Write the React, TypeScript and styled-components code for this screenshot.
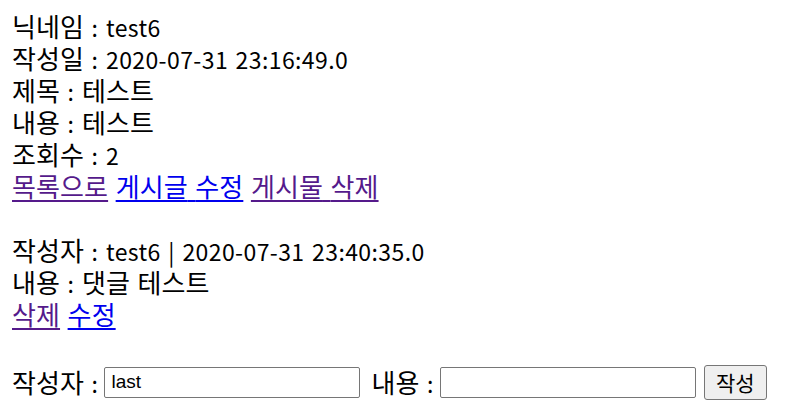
import React from 'react';
import styled, { createGlobalStyle } from 'styled-components';

const GlobalStyle = createGlobalStyle`
    body {
        margin: 10px 12px;
        background: #ffffff;
        color: #000000;
        font-family: 'Noto Sans CJK KR', 'Noto Sans', sans-serif;
        font-size: 23px;
        line-height: 32px;
        letter-spacing: 0.4px;
        word-spacing: 2px;
    }
`;

interface Link {
    label: string;
    visited: boolean;
}

const postLinks: Link[] = [
    { label: '목록으로', visited: true },
    { label: '게시글 수정', visited: false },
    { label: '게시물 삭제', visited: true },
];

const replyLinks: Link[] = [
    { label: '삭제', visited: true },
    { label: '수정', visited: false },
];

// hangul in the original font runs wider than latin, so give it its own size
const Ko = ({ text }: { text: string }) => (
    <>
        {text.split(/([\uAC00-\uD7A3]+)/).map((part, i) =>
            /[\uAC00-\uD7A3]/.test(part) ? <Hangul key={i}>{part}</Hangul> : part
        )}
    </>
);

export default function App() {
    return (
        <>
            <GlobalStyle />
            <Page>
                <Line><Ko text="닉네임 : test6" /></Line>
                <Line><Ko text="작성일 : 2020-07-31 23:16:49.0" /></Line>
                <Line><Ko text="제목 : 테스트" /></Line>
                <Line><Ko text="내용 : 테스트" /></Line>
                <Line><Ko text="조회수 : 2" /></Line>
                <LinkRow links={postLinks} />
                <Blank />
                <Line><Ko text="작성자 : test6 | 2020-07-31 23:40:35.0" /></Line>
                <Line><Ko text="내용 : 댓글 테스트" /></Line>
                <LinkRow links={replyLinks} />
                <Blank />
                <CommentForm onSubmit={(e) => e.preventDefault()}>
                    <Label><Ko text="작성자 :" /></Label>
                    <Field type="text" defaultValue="last" />
                    <Label><Ko text="내용 :" /></Label>
                    <Field type="text" />
                    <SubmitButton type="submit">작성</SubmitButton>
                </CommentForm>
            </Page>
        </>
    );
}

const LinkRow = ({ links }: { links: Link[] }) => (
    <Line>
        {links.map((l, i) => (
            <React.Fragment key={l.label}>
                {i > 0 && ' '}
                <TextLink href="#" visited={l.visited}>
                    <Ko text={l.label} />
                </TextLink>
            </React.Fragment>
        ))}
    </Line>
);

const Page = styled.div`
    display: flex;
    flex-direction: column;
`;

const Line = styled.div`
    height: 32px;
    white-space: pre;
`;

const Hangul = styled.span`
    font-size: 26px;
    letter-spacing: 0.1px;
    line-height: 32px;
`;

const Blank = styled.div`
    height: 32px;
`;

const TextLink = styled.a<{ visited: boolean }>`
    color: ${(props) => (props.visited ? '#551a8b' : '#0000ee')};
    text-decoration: underline;
    text-underline-offset: 3px;
`;

const CommentForm = styled.form`
    display: flex;
    align-items: center;
    height: 40px;
    white-space: pre;
`;

const Label = styled.span`
    margin-right: 6px;
`;

const Field = styled.input`
    box-sizing: border-box;
    width: 256px;
    height: 31px;
    margin: 0 11px 0 0;
    padding: 1px 6px;
    border: 1px solid #767676;
    border-radius: 2px;
    font-family: 'Liberation Sans', Arial, sans-serif;
    font-size: 19px;
    letter-spacing: 0;
    color: #000;
    outline: none;
`;

const SubmitButton = styled.button`
    box-sizing: border-box;
    width: 63px;
    height: 35px;
    margin-left: -3px;
    padding: 0 8px;
    background: #efefef;
    border: 1px solid #767676;
    border-radius: 3px;
    font-family: 'Noto Sans CJK KR', sans-serif;
    font-size: 21px;
    letter-spacing: 0;
    color: #000;
`;
